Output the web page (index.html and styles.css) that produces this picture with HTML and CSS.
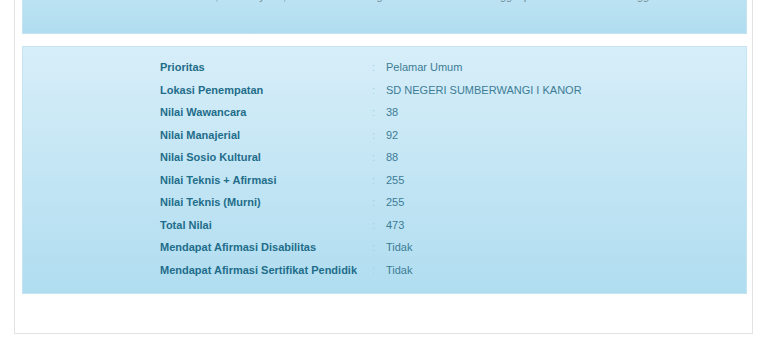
FILE: index.html
```html
<!DOCTYPE html>
<html lang="id">
<head>
<meta charset="utf-8">
<title>Hasil Seleksi</title>
<link rel="stylesheet" href="styles.css">
</head>
<body>
<div class="panel">
  <div class="alert alert-note">
    <p class="note">Kementerian Pendidikan, Kebudayaan, Riset dan Teknologi dalam menentukan tanggal pelaksanaan masa sanggahan</p>
  </div>
  <div class="alert alert-result">
    <table class="result">
      <tr><td class="lbl">Prioritas</td><td class="sep">:</td><td class="val">Pelamar Umum</td></tr>
      <tr><td class="lbl">Lokasi Penempatan</td><td class="sep">:</td><td class="val">SD NEGERI SUMBERWANGI I KANOR</td></tr>
      <tr><td class="lbl">Nilai Wawancara</td><td class="sep">:</td><td class="val">38</td></tr>
      <tr><td class="lbl">Nilai Manajerial</td><td class="sep">:</td><td class="val">92</td></tr>
      <tr><td class="lbl">Nilai Sosio Kultural</td><td class="sep">:</td><td class="val">88</td></tr>
      <tr><td class="lbl">Nilai Teknis + Afirmasi</td><td class="sep">:</td><td class="val">255</td></tr>
      <tr><td class="lbl">Nilai Teknis (Murni)</td><td class="sep">:</td><td class="val">255</td></tr>
      <tr><td class="lbl">Total Nilai</td><td class="sep">:</td><td class="val">473</td></tr>
      <tr><td class="lbl">Mendapat Afirmasi Disabilitas</td><td class="sep">:</td><td class="val">Tidak</td></tr>
      <tr><td class="lbl">Mendapat Afirmasi Sertifikat Pendidik</td><td class="sep">:</td><td class="val">Tidak</td></tr>
    </table>
  </div>
</div>
</body>
</html>
```
FILE: styles.css
```css
html, body {
  margin: 0;
  padding: 0;
  background: #ffffff;
  font-family: "Liberation Sans", Arial, sans-serif;
  font-size: 11px;
}

.panel {
  margin: -37px 17px 0 14px;
  border: 1px solid #e3e3e3;
  border-top: none;
  padding: 8px 5px 39px 7px;
  background: #ffffff;
}

.alert {
  border: 1px solid #c4e4f2;
}

.alert-note {
  padding: 16px 15px 28px;
  background: linear-gradient(to bottom, #c6e7f4 0%, #b0ddf0 100%);
  margin-bottom: 12px;
}

.note {
  margin: 0;
  text-align: center;
  line-height: 17px;
  color: #6f8c98;
}

.alert-result {
  background: linear-gradient(to bottom, #d7eef9 0%, #b0ddf0 100%);
  padding: 9px 0 12px 137px;
}

.result {
  border-collapse: collapse;
}

.result td {
  padding: 0;
  line-height: 22.5px;
  vertical-align: middle;
  white-space: nowrap;
}

.lbl {
  width: 212px;
  font-weight: bold;
  color: #1f6d8a;
}

.sep {
  width: 14px;
  color: #a3cfe0;
}

.val {
  color: #3c7c95;
}
```
